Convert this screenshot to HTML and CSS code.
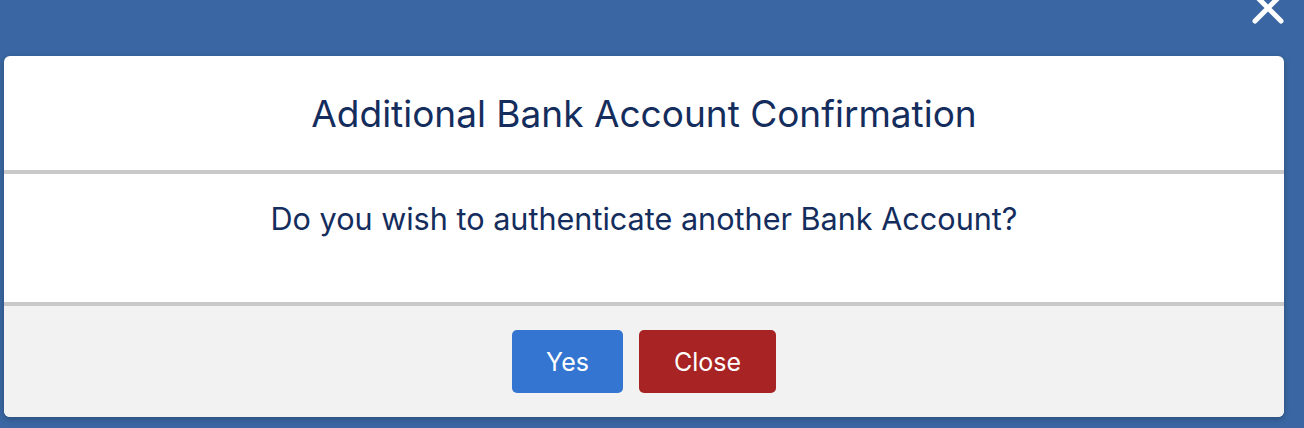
FILE: index.html
```html
<!DOCTYPE html>
<html lang="en">
<head>
<meta charset="utf-8">
<title>Additional Bank Account Confirmation</title>
<link rel="stylesheet" href="styles.css">
</head>
<body>
<div class="backdrop">
  <button class="close-x" aria-label="Close">
    <svg width="36" height="36" viewBox="0 0 36 36"><path d="M5 5 L31 31 M31 5 L5 31" stroke="#fff" stroke-width="5" stroke-linecap="round"/></svg>
  </button>
  <div class="modal">
    <div class="modal-header">
      <h2 class="modal-title">Additional Bank Account Confirmation</h2>
    </div>
    <div class="modal-body">
      <p class="modal-text">Do you wish to authenticate another Bank Account?</p>
    </div>
    <div class="modal-footer">
      <button class="btn btn-yes">Yes</button>
      <button class="btn btn-close">Close</button>
    </div>
  </div>
</div>
</body>
</html>
```
FILE: styles.css
```css
html, body {
  margin: 0;
  padding: 0;
  background: #3a67a3;
  font-family: Inter, "Noto Sans", sans-serif;
}
.backdrop {
  position: relative;
  width: 1304px;
  height: 428px;
  padding: 56px 20px 0 4px;
  box-sizing: border-box;
  overflow: hidden;
}
.close-x {
  position: absolute;
  top: -10px;
  left: 1250px;
  border: 0;
  background: none;
  padding: 0;
  width: 36px;
  height: 36px;
}
.modal {
  width: 1280px;
  background: #fff;
  border-radius: 6px;
  overflow: hidden;
  box-shadow: 0 2px 6px rgba(0,0,0,0.25);
}
.modal-header {
  height: 114px;
  display: flex;
  align-items: center;
  justify-content: center;
  border-bottom: 4px solid #c9c9c9;
}
.modal-title {
  margin: 0;
  font-weight: 400;
  font-size: 37px;
  color: #142d5d;
}
.modal-body {
  height: 132px;
  display: flex;
  justify-content: center;
  padding-top: 26px;
  box-sizing: border-box;
  border-bottom: 4px solid #c9c9c9;
}
.modal-text {
  margin: 0;
  font-size: 30.6px;
  color: #142d5d;
}
.modal-footer {
  height: 111px;
  background: #f2f2f2;
  display: flex;
  justify-content: center;
  align-items: center;
  gap: 16px;
}
.btn {
  height: 63px;
  border: 0;
  border-radius: 5px;
  color: #fff;
  font-family: Inter, "Noto Sans", sans-serif;
  font-size: 25px;
  padding: 0;
}
.btn-yes {
  width: 111px;
  background: #3375d0;
}
.btn-close {
  width: 137px;
  background: #a82424;
}
```
